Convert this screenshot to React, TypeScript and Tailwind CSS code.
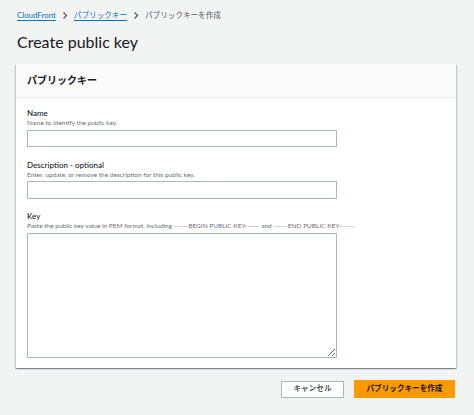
import React from 'react';

const FONT = { fontFamily: 'Lato, "Noto Sans CJK JP", sans-serif' };

function Chevron() {
  return (
    <svg width="8" height="9" viewBox="0 0 8 9" className="mx-[5px]">
      <path d="M2.5 1.5 L5.5 4.5 L2.5 7.5" fill="none" stroke="#545b64" strokeWidth="1.3" />
    </svg>
  );
}

function Field({ label, hint, children }: { label: string; hint: string; children: React.ReactNode }) {
  return (
    <div className="flex flex-col">
      <div className="text-[8px] leading-[10px] font-medium text-[#16191f]">{label}</div>
      <div className="text-[6.5px] leading-[10px] text-[#687078] whitespace-nowrap">{hint}</div>
      {children}
    </div>
  );
}

export default function App() {
  return (
    <div className="w-[474px] h-[415px] bg-[#f2f3f3] overflow-hidden flex flex-col" style={FONT}>
      {/* breadcrumb */}
      <div className="flex items-center px-[17px] pt-[9px] h-[21px] text-[7.9px] leading-[12px]">
        <span className="text-[#0073bb] underline underline-offset-2">CloudFront</span>
        <Chevron />
        <span className="text-[#0073bb] underline underline-offset-2 text-[7.6px]">パブリックキー</span>
        <Chevron />
        <span className="text-[#545b64] text-[7.6px]">パブリックキーを作成</span>
      </div>

      <h1 className="px-[17px] mt-[9px] text-[16px] leading-[24px] text-[#16191f]">Create public key</h1>

      {/* card */}
      <div className="ml-[16px] mt-[10px] w-[440px] h-[304px] bg-white shadow-[0_1px_1px_0_rgba(0,28,36,0.3),1px_1px_1px_0_rgba(0,28,36,0.15),-1px_1px_1px_0_rgba(0,28,36,0.15)] flex flex-col">
        <div className="h-[34px] bg-[#fafafa] border-b border-[#eaeded] px-[11px] flex items-center">
          <span className="text-[10px] font-bold text-[#16191f]">パブリックキー</span>
        </div>
        <div className="pl-[11px] pt-[10px] flex flex-col gap-[13px]">
          <Field label="Name" hint="Name to identify the public key.">
            <input className="mt-[2px] w-[310px] h-[17px] border border-[#aab7b8] bg-white" />
          </Field>
          <Field label="Description - optional" hint="Enter, update, or remove the description for this public key.">
            <input className="mt-[1px] w-[310px] h-[18px] border border-[#aab7b8] bg-white" />
          </Field>
          <div className="-mt-[1px]">
            <Field
              label="Key"
              hint="Paste the public key value in PEM format, including ------BEGIN PUBLIC KEY------ and ------END PUBLIC KEY------."
            >
              <textarea className="mt-[2px] w-[310px] h-[125px] border border-[#aab7b8] bg-white block" />
            </Field>
          </div>
        </div>
      </div>

      {/* actions */}
      <div className="flex justify-end items-center gap-[10px] pr-[19px] mt-[12px]">
        <button className="w-[63px] h-[17px] border border-[#aab7b8] bg-white text-[7.6px] font-bold text-[#545b64] flex items-center justify-center">
          キャンセル
        </button>
        <button className="w-[101px] h-[18px] bg-[#ff9900] text-[7.6px] font-bold text-[#16191f] flex items-center justify-center">
          パブリックキーを作成
        </button>
      </div>
    </div>
  );
}
